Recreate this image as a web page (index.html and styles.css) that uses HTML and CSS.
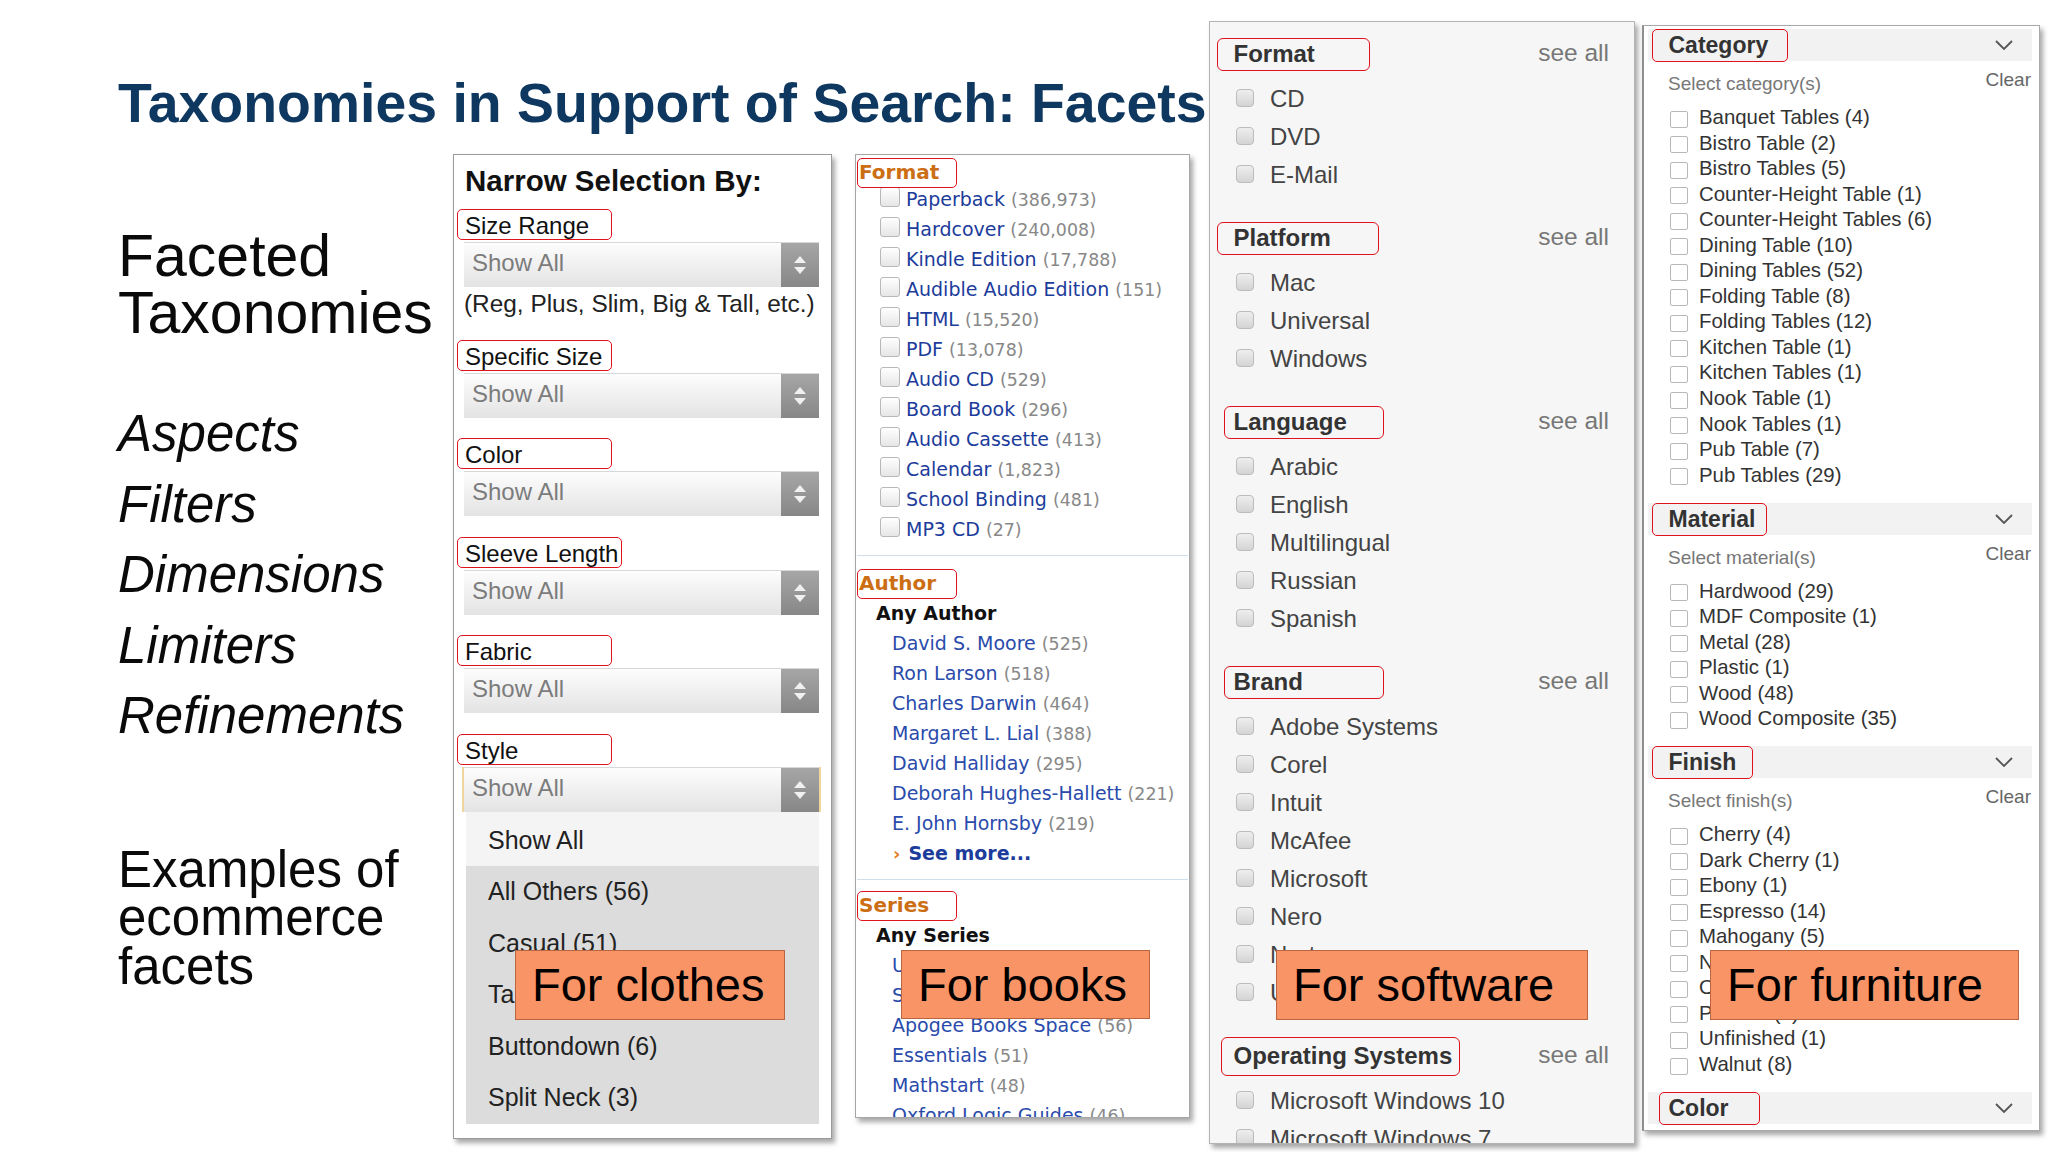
FILE: index.html
```html
<!DOCTYPE html>
<html>
<head>
<meta charset="utf-8">
<link rel="stylesheet" href="styles.css">
</head>
<body>
<div class="slide">
  <div class="main">
    <h1 class="title">Taxonomies in Support of Search: Facets</h1>
    <div class="row">
      <div class="terms">
        <p class="t-faceted"><span>Faceted</span><span>Taxonomies</span></p>
        <p class="t-aspects"><span>Aspects</span><span>Filters</span><span>Dimensions</span><span>Limiters</span><span>Refinements</span></p>
        <p class="t-examples"><span>Examples of</span><span>ecommerce</span><span>facets</span></p>
      </div>

      <section class="panel clothes">
        <div class="c-head">Narrow Selection By:</div>
        <div class="c-sec c-first">
          <div class="c-label">Size Range</div>
          <div class="c-select"><span class="c-value">Show All</span><span class="c-btn"><svg width="16" height="22" viewBox="0 0 16 22"><path d="M2 9 L8 2 L14 9 Z M2 13 L8 20 L14 13 Z" fill="#f0f0f0"/></svg></span></div>
          <div class="c-note">(Reg, Plus, Slim, Big &amp; Tall, etc.)</div>
        </div>
        <div class="c-sec">
          <div class="c-label">Specific Size</div>
          <div class="c-select"><span class="c-value">Show All</span><span class="c-btn"><svg width="16" height="22" viewBox="0 0 16 22"><path d="M2 9 L8 2 L14 9 Z M2 13 L8 20 L14 13 Z" fill="#f0f0f0"/></svg></span></div>
        </div>
        <div class="c-sec">
          <div class="c-label">Color</div>
          <div class="c-select"><span class="c-value">Show All</span><span class="c-btn"><svg width="16" height="22" viewBox="0 0 16 22"><path d="M2 9 L8 2 L14 9 Z M2 13 L8 20 L14 13 Z" fill="#f0f0f0"/></svg></span></div>
        </div>
        <div class="c-sec">
          <div class="c-label wide">Sleeve Length</div>
          <div class="c-select"><span class="c-value">Show All</span><span class="c-btn"><svg width="16" height="22" viewBox="0 0 16 22"><path d="M2 9 L8 2 L14 9 Z M2 13 L8 20 L14 13 Z" fill="#f0f0f0"/></svg></span></div>
        </div>
        <div class="c-sec">
          <div class="c-label">Fabric</div>
          <div class="c-select"><span class="c-value">Show All</span><span class="c-btn"><svg width="16" height="22" viewBox="0 0 16 22"><path d="M2 9 L8 2 L14 9 Z M2 13 L8 20 L14 13 Z" fill="#f0f0f0"/></svg></span></div>
        </div>
        <div class="c-sec">
          <div class="c-label">Style</div>
          <div class="c-select focus"><span class="c-value">Show All</span><span class="c-btn"><svg width="16" height="22" viewBox="0 0 16 22"><path d="M2 9 L8 2 L14 9 Z M2 13 L8 20 L14 13 Z" fill="#f0f0f0"/></svg></span></div>
          <div class="c-list">
            <div class="c-opt c-hl">Show All</div>
            <div class="c-opt">All Others (56)</div>
            <div class="c-opt">Casual (51)</div>
            <div class="c-opt">Tailored (12)</div>
            <div class="c-opt">Buttondown (6)</div>
            <div class="c-opt">Split Neck (3)</div>
          </div>
        </div>
        <div class="tag tag-clothes">For clothes</div>
      </section>

      <section class="panel books">
        <div class="b-head">Format</div>
        <div class="b-list">
          <div class="b-opt"><span class="b-cb"></span><span class="b-link">Paperback</span> <span class="b-count">(386,973)</span></div>
          <div class="b-opt"><span class="b-cb"></span><span class="b-link">Hardcover</span> <span class="b-count">(240,008)</span></div>
          <div class="b-opt"><span class="b-cb"></span><span class="b-link">Kindle Edition</span> <span class="b-count">(17,788)</span></div>
          <div class="b-opt"><span class="b-cb"></span><span class="b-link">Audible Audio Edition</span> <span class="b-count">(151)</span></div>
          <div class="b-opt"><span class="b-cb"></span><span class="b-link">HTML</span> <span class="b-count">(15,520)</span></div>
          <div class="b-opt"><span class="b-cb"></span><span class="b-link">PDF</span> <span class="b-count">(13,078)</span></div>
          <div class="b-opt"><span class="b-cb"></span><span class="b-link">Audio CD</span> <span class="b-count">(529)</span></div>
          <div class="b-opt"><span class="b-cb"></span><span class="b-link">Board Book</span> <span class="b-count">(296)</span></div>
          <div class="b-opt"><span class="b-cb"></span><span class="b-link">Audio Cassette</span> <span class="b-count">(413)</span></div>
          <div class="b-opt"><span class="b-cb"></span><span class="b-link">Calendar</span> <span class="b-count">(1,823)</span></div>
          <div class="b-opt"><span class="b-cb"></span><span class="b-link">School Binding</span> <span class="b-count">(481)</span></div>
          <div class="b-opt"><span class="b-cb"></span><span class="b-link">MP3 CD</span> <span class="b-count">(27)</span></div>
        </div>
        <div class="b-sep"></div>
        <div class="b-head b-author">Author</div>
        <div class="b-any">Any Author</div>
        <div class="b-sub"><span class="b-link2">David S. Moore</span> <span class="b-count">(525)</span></div>
        <div class="b-sub"><span class="b-link2">Ron Larson</span> <span class="b-count">(518)</span></div>
        <div class="b-sub"><span class="b-link2">Charles Darwin</span> <span class="b-count">(464)</span></div>
        <div class="b-sub"><span class="b-link2">Margaret L. Lial</span> <span class="b-count">(388)</span></div>
        <div class="b-sub"><span class="b-link2">David Halliday</span> <span class="b-count">(295)</span></div>
        <div class="b-sub"><span class="b-link2">Deborah Hughes-Hallett</span> <span class="b-count">(221)</span></div>
        <div class="b-sub"><span class="b-link2">E. John Hornsby</span> <span class="b-count">(219)</span></div>
        <div class="b-more"><span class="b-arrow">›</span>See more...</div>
        <div class="b-sep"></div>
        <div class="b-head b-series">Series</div>
        <div class="b-any">Any Series</div>
        <div class="b-sub"><span class="b-link2">Usborne Books</span> <span class="b-count">(81)</span></div>
        <div class="b-sub"><span class="b-link2">Star Wars</span> <span class="b-count">(62)</span></div>
        <div class="b-sub"><span class="b-link2">Apogee Books Space</span> <span class="b-count">(56)</span></div>
        <div class="b-sub"><span class="b-link2">Essentials</span> <span class="b-count">(51)</span></div>
        <div class="b-sub"><span class="b-link2">Mathstart</span> <span class="b-count">(48)</span></div>
        <div class="b-sub"><span class="b-link2">Oxford Logic Guides</span> <span class="b-count">(46)</span></div>
        <div class="tag tag-books">For books</div>
      </section>
    </div>
  </div>

  <section class="panel software">
    <div class="sw-sec">
      <div class="sw-row"><span class="sw-head h-format">Format</span><span class="sw-see">see all</span></div>
      <div class="sw-list">
        <div class="sw-opt"><span class="sw-cb"></span>CD</div>
        <div class="sw-opt"><span class="sw-cb"></span>DVD</div>
        <div class="sw-opt"><span class="sw-cb"></span>E-Mail</div>
      </div>
    </div>
    <div class="sw-sec">
      <div class="sw-row"><span class="sw-head h-platform">Platform</span><span class="sw-see">see all</span></div>
      <div class="sw-list">
        <div class="sw-opt"><span class="sw-cb"></span>Mac</div>
        <div class="sw-opt"><span class="sw-cb"></span>Universal</div>
        <div class="sw-opt"><span class="sw-cb"></span>Windows</div>
      </div>
    </div>
    <div class="sw-sec">
      <div class="sw-row"><span class="sw-head h-language">Language</span><span class="sw-see">see all</span></div>
      <div class="sw-list">
        <div class="sw-opt"><span class="sw-cb"></span>Arabic</div>
        <div class="sw-opt"><span class="sw-cb"></span>English</div>
        <div class="sw-opt"><span class="sw-cb"></span>Multilingual</div>
        <div class="sw-opt"><span class="sw-cb"></span>Russian</div>
        <div class="sw-opt"><span class="sw-cb"></span>Spanish</div>
      </div>
    </div>
    <div class="sw-sec">
      <div class="sw-row"><span class="sw-head h-brand">Brand</span><span class="sw-see">see all</span></div>
      <div class="sw-list">
        <div class="sw-opt"><span class="sw-cb"></span>Adobe Systems</div>
        <div class="sw-opt"><span class="sw-cb"></span>Corel</div>
        <div class="sw-opt"><span class="sw-cb"></span>Intuit</div>
        <div class="sw-opt"><span class="sw-cb"></span>McAfee</div>
        <div class="sw-opt"><span class="sw-cb"></span>Microsoft</div>
        <div class="sw-opt"><span class="sw-cb"></span>Nero</div>
        <div class="sw-opt"><span class="sw-cb"></span>Norton</div>
        <div class="sw-opt"><span class="sw-cb"></span>Ulead</div>
      </div>
    </div>
    <div class="sw-sec">
      <div class="sw-row"><span class="sw-head h-os">Operating Systems</span><span class="sw-see">see all</span></div>
      <div class="sw-list">
        <div class="sw-opt"><span class="sw-cb"></span>Microsoft Windows 10</div>
        <div class="sw-opt"><span class="sw-cb"></span>Microsoft Windows 7</div>
      </div>
    </div>
    <div class="tag tag-software">For software</div>
  </section>

  <section class="panel furniture">
    <div class="f-sec">
      <div class="f-head"><span class="f-label l-category">Category</span><svg class="f-chev" width="18" height="10" viewBox="0 0 18 10"><path d="M1 1 L9 9 L17 1" fill="none" stroke="#555" stroke-width="1.8"/></svg></div>
      <div class="f-sub"><span>Select category(s)</span><span class="f-clear">Clear</span></div>
      <div class="f-list">
        <div class="f-opt"><span class="f-cb"></span>Banquet Tables (4)</div>
        <div class="f-opt"><span class="f-cb"></span>Bistro Table (2)</div>
        <div class="f-opt"><span class="f-cb"></span>Bistro Tables (5)</div>
        <div class="f-opt"><span class="f-cb"></span>Counter-Height Table (1)</div>
        <div class="f-opt"><span class="f-cb"></span>Counter-Height Tables (6)</div>
        <div class="f-opt"><span class="f-cb"></span>Dining Table (10)</div>
        <div class="f-opt"><span class="f-cb"></span>Dining Tables (52)</div>
        <div class="f-opt"><span class="f-cb"></span>Folding Table (8)</div>
        <div class="f-opt"><span class="f-cb"></span>Folding Tables (12)</div>
        <div class="f-opt"><span class="f-cb"></span>Kitchen Table (1)</div>
        <div class="f-opt"><span class="f-cb"></span>Kitchen Tables (1)</div>
        <div class="f-opt"><span class="f-cb"></span>Nook Table (1)</div>
        <div class="f-opt"><span class="f-cb"></span>Nook Tables (1)</div>
        <div class="f-opt"><span class="f-cb"></span>Pub Table (7)</div>
        <div class="f-opt"><span class="f-cb"></span>Pub Tables (29)</div>
      </div>
    </div>
    <div class="f-sec">
      <div class="f-head"><span class="f-label l-material">Material</span><svg class="f-chev" width="18" height="10" viewBox="0 0 18 10"><path d="M1 1 L9 9 L17 1" fill="none" stroke="#555" stroke-width="1.8"/></svg></div>
      <div class="f-sub"><span>Select material(s)</span><span class="f-clear">Clear</span></div>
      <div class="f-list">
        <div class="f-opt"><span class="f-cb"></span>Hardwood (29)</div>
        <div class="f-opt"><span class="f-cb"></span>MDF Composite (1)</div>
        <div class="f-opt"><span class="f-cb"></span>Metal (28)</div>
        <div class="f-opt"><span class="f-cb"></span>Plastic (1)</div>
        <div class="f-opt"><span class="f-cb"></span>Wood (48)</div>
        <div class="f-opt"><span class="f-cb"></span>Wood Composite (35)</div>
      </div>
    </div>
    <div class="f-sec">
      <div class="f-head"><span class="f-label l-finish">Finish</span><svg class="f-chev" width="18" height="10" viewBox="0 0 18 10"><path d="M1 1 L9 9 L17 1" fill="none" stroke="#555" stroke-width="1.8"/></svg></div>
      <div class="f-sub"><span>Select finish(s)</span><span class="f-clear">Clear</span></div>
      <div class="f-list">
        <div class="f-opt"><span class="f-cb"></span>Cherry (4)</div>
        <div class="f-opt"><span class="f-cb"></span>Dark Cherry (1)</div>
        <div class="f-opt"><span class="f-cb"></span>Ebony (1)</div>
        <div class="f-opt"><span class="f-cb"></span>Espresso (14)</div>
        <div class="f-opt"><span class="f-cb"></span>Mahogany (5)</div>
        <div class="f-opt"><span class="f-cb"></span>Natural (3)</div>
        <div class="f-opt"><span class="f-cb"></span>Oak (9)</div>
        <div class="f-opt"><span class="f-cb"></span>Painted (6)</div>
        <div class="f-opt"><span class="f-cb"></span>Unfinished (1)</div>
        <div class="f-opt"><span class="f-cb"></span>Walnut (8)</div>
      </div>
    </div>
    <div class="f-sec">
      <div class="f-head"><span class="f-label l-color">Color</span><svg class="f-chev" width="18" height="10" viewBox="0 0 18 10"><path d="M1 1 L9 9 L17 1" fill="none" stroke="#555" stroke-width="1.8"/></svg></div>
    </div>
    <div class="tag tag-furniture">For furniture</div>
  </section>
</div>
</body>
</html>
```

FILE: styles.css
```css
* { box-sizing: border-box; }
html, body { margin: 0; padding: 0; }
body {
  width: 2048px;
  height: 1152px;
  overflow: hidden;
  background: #fff;
  font-family: "Liberation Sans", Arial, sans-serif;
  color: #111;
}
.slide {
  display: flex;
  align-items: flex-start;
  padding-left: 118px;
  height: 1152px;
}
.main { width: 1072px; flex: none; }
.title {
  margin: 72px 0 0;
  font-size: 55.4px;
  line-height: 62px;
  font-weight: bold;
  color: #0e3860;
  white-space: nowrap;
}
.row { display: flex; align-items: flex-start; margin-top: 20px; }

/* left terms */
.terms { width: 335px; flex: none; color: #0a0a0a; }
.terms p { margin: 0; white-space: nowrap; }
.terms span { display: block; }
.t-faceted { margin-top: 74px !important; font-size: 59px; line-height: 57px; }
.t-aspects { margin-top: 57px !important; font-size: 51px; line-height: 70.5px; font-style: italic; }
.t-examples { margin-top: 94px !important; font-size: 51px; line-height: 48.5px; }

/* panels */
.panel {
  flex: none;
  position: relative;
  overflow: hidden;
  box-shadow: 3px 4px 5px rgba(0, 0, 0, 0.35);
}
.tag {
  position: absolute;
  background: #f99466;
  border: 1px solid #b9653f;
  font-family: "Liberation Sans", Arial, sans-serif;
  font-size: 47px;
  line-height: 68px;
  padding-left: 16px;
  color: #000;
  white-space: nowrap;
}
.tag-clothes { left: 61px; top: 795px; width: 270px; height: 70px; }
.tag-books { left: 45px; top: 795px; width: 249px; height: 69px; }
.tag-software { left: 66px; top: 928px; width: 312px; height: 70px; }
.tag-furniture { left: 66px; top: 924px; width: 309px; height: 70px; }

/* clothes */
.clothes {
  width: 379px;
  height: 985px;
  border: 1px solid #9a9a9a;
  background: #fff;
}
.c-head {
  margin: 8px 0 0 11px;
  font-size: 29.5px;
  line-height: 36px;
  font-weight: bold;
  color: #111;
  white-space: nowrap;
}
.c-sec { margin-bottom: 20.5px; }
.c-first { margin-top: 10px; }
.c-label {
  margin-left: 3px;
  width: 155px;
  height: 31px;
  border: 1.5px solid #e0121c;
  border-radius: 5px;
  padding: 3px 0 0 7px;
  font-size: 24px;
  line-height: 25px;
  color: #111;
  white-space: nowrap;
}
.c-label.wide { width: 165px; }
.c-select {
  display: flex;
  margin: 2px 0 0 10px;
  width: 355px;
  height: 45px;
  border-top: 1px solid #d8d8d8;
  background: linear-gradient(#fdfdfd, #e3e3e3);
}
.c-select.focus { box-shadow: -2px 0 0 #f1d59c, 2px 0 0 #f1d59c; }
.c-value {
  flex: 1;
  padding-left: 8px;
  font-size: 24px;
  line-height: 39px;
  color: #7c7c7c;
}
.c-btn {
  width: 38px;
  display: flex;
  align-items: center;
  justify-content: center;
  background: linear-gradient(#a6a6a6, #878787);
}
.c-note {
  margin: 2px 0 0 10px;
  font-size: 24.4px;
  line-height: 30px;
  color: #222;
  white-space: nowrap;
}
.c-list {
  margin-left: 12px;
  width: 353px;
  background: #dcdcdc;
}
.c-opt {
  padding-left: 22px;
  font-size: 25px;
  line-height: 51.5px;
  color: #222;
  white-space: nowrap;
}
.c-hl { background: #f4f4f4; padding-top: 3px; }

/* books */
.books {
  width: 335px;
  height: 964px;
  margin-left: 23px;
  border: 1px solid #a6a6a6;
  background: #fff;
  font-family: "DejaVu Sans", Verdana, sans-serif;
}
.b-head {
  position: relative;
  z-index: 1;
  margin: 3px 0 -3.6px 1px;
  width: 100px;
  height: 30px;
  border: 1.5px solid #e0121c;
  border-radius: 5px;
  padding-left: 1px;
  font-size: 20px;
  font-weight: bold;
  line-height: 27px;
  color: #cc6e14;
}
.b-author { margin-top: 12.6px; margin-bottom: -1.5px; }
.b-series { margin-top: 11px; margin-bottom: -1px; }
.b-opt, .b-sub, .b-any, .b-more {
  height: 30px;
  line-height: 30px;
  font-size: 19px;
  white-space: nowrap;
}
.b-opt { padding-left: 24px; }
.b-cb {
  display: inline-block;
  width: 20px;
  height: 20px;
  border: 1px solid #b8b8b8;
  border-radius: 3px;
  background: linear-gradient(#fff, #e6e6e6);
  vertical-align: -1px;
  margin-right: 6px;
}
.b-link { color: #1c3c9b; }
.b-link2 { color: #2a4bab; }
.b-count { color: #888; font-size: 17.4px; line-height: 20px; }
.b-sep { margin: 11px 1px 0; height: 1px; background: #cfe0ec; }
.b-any {
  padding-left: 20px;
  font-weight: bold;
  color: #111;
}
.b-sub { padding-left: 36px; }
.b-more {
  padding-left: 37px;
  font-weight: bold;
  color: #1c3c9b;
}
.b-arrow { color: #e47911; margin-right: 8px; font-size: 18px; line-height: 20px; }

/* software */
.software {
  width: 426px;
  height: 1123px;
  margin: 21px 0 0 19px;
  border: 1px solid #b3b3b3;
  background: #f6f6f6;
  padding-top: 16px;
}
.sw-sec + .sw-sec { margin-top: 28.5px; }
.sw-row {
  display: flex;
  align-items: center;
  justify-content: space-between;
  height: 33px;
  padding-right: 25px;
}
.sw-head {
  height: 33px;
  border: 1.5px solid #e0121c;
  border-radius: 6px;
  font-size: 24px;
  font-weight: bold;
  line-height: 30px;
  color: #333;
  white-space: nowrap;
}
.h-format { margin-left: 7px; width: 153px; padding-left: 15.5px; }
.h-platform { margin-left: 7px; width: 162px; padding-left: 15.5px; }
.h-language, .h-brand { margin-left: 14px; width: 160px; padding-left: 8.5px; }
.h-os { margin-left: 11px; width: 239px; padding-left: 11.5px; height: 39px; line-height: 36px; }
.sw-see { font-size: 24.5px; line-height: 30px; color: #777; margin-top: -4px; }
.sw-list { margin-top: 8.5px; }
.sw-opt {
  height: 38px;
  line-height: 38px;
  padding-left: 26px;
  font-size: 24px;
  color: #444;
  white-space: nowrap;
}
.sw-cb {
  display: inline-block;
  width: 18px;
  height: 18px;
  border: 1px solid #bcbcbc;
  border-radius: 4px;
  background: linear-gradient(#eeeeee, #d4d4d4);
  margin-right: 16px;
  vertical-align: 0;
}

/* furniture */
.furniture {
  width: 398px;
  height: 1106px;
  margin: 25px 0 0 7px;
  border: 1px solid #a9a9a9;
  border-left: 2px solid #8e8e8e;
  background: #fff;
  padding-top: 3px;
}
.f-sec + .f-sec { margin-top: 14.3px; }
.f-head {
  display: flex;
  align-items: flex-start;
  justify-content: space-between;
  height: 32px;
  margin: 0 7px 0 4px;
  background: #f2f2f2;
}
.f-label {
  margin-left: 4px;
  height: 33px;
  border: 1.5px solid #e0121c;
  border-radius: 5px;
  padding-left: 15.5px;
  font-size: 23px;
  font-weight: bold;
  line-height: 31px;
  color: #333;
  white-space: nowrap;
}
.l-category { width: 136px; }
.l-material { width: 115px; }
.l-finish { width: 101px; }
.l-color { width: 101px; margin-left: 11px; padding-left: 8.5px; }
.f-chev { margin: 11px 19px 0 0; flex: none; }
.f-sub {
  display: flex;
  align-items: flex-start;
  justify-content: space-between;
  margin-top: 11px;
  padding: 0 8px 0 24px;
  font-size: 19px;
  line-height: 24px;
  color: #777;
}
.f-clear { margin-top: -4px; color: #666; }
.f-list { margin-top: 9px; }
.f-opt {
  height: 25.56px;
  line-height: 25.56px;
  padding-left: 26px;
  font-size: 20.4px;
  color: #333;
  white-space: nowrap;
}
.f-cb {
  display: inline-block;
  width: 18px;
  height: 17px;
  border: 1.5px solid #b8b8b8;
  border-radius: 2px;
  background: #fff;
  margin-right: 11px;
  vertical-align: -3.5px;
}
```
